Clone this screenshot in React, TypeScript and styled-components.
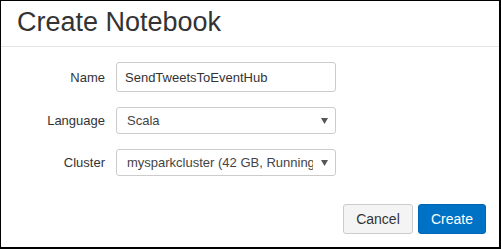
import styled, { createGlobalStyle } from 'styled-components'

const GlobalStyle = createGlobalStyle`
  html, body {
    margin: 0;
    padding: 0;
    background: #fff;
  }
  body {
    font-family: 'Liberation Sans', Arial, sans-serif;
    color: #333;
  }
`

const Frame = styled.div`
  box-sizing: border-box;
  width: 501px;
  height: 249px;
  border-style: solid;
  border-color: #000;
  border-width: 1px 2px 2px 1px;
  display: flex;
  flex-direction: column;
  background: #fff;
`

const Header = styled.div`
  box-sizing: border-box;
  height: 46px;
  padding: 5px 16px 0;
  border-bottom: 1px solid #e5e5e5;
`

const Title = styled.h1`
  margin: 0;
  font-size: 27px;
  font-weight: normal;
  line-height: 32px;
  color: #333;
`

const Form = styled.div`
  display: flex;
  flex-direction: column;
  gap: 15px;
  padding-top: 15px;
`

const Row = styled.div`
  display: grid;
  grid-template-columns: 104px 220px;
  column-gap: 11px;
  align-items: center;
`

const Label = styled.label`
  text-align: right;
  font-size: 13px;
  color: #333;
`

const TextInput = styled.input`
  box-sizing: border-box;
  height: 30px;
  width: 100%;
  padding: 0 8px;
  border: 1px solid #ccc;
  border-radius: 3px;
  font-family: 'Liberation Sans', Arial, sans-serif;
  font-size: 13px;
  color: #333;
  outline: none;
`

const SelectBox = styled.div`
  box-sizing: border-box;
  height: 27px;
  display: flex;
  align-items: center;
  padding: 0 7px 0 10px;
  border: 1px solid #ccc;
  border-radius: 3px;
  font-size: 13px;
  color: #444;
`

const SelectValue = styled.span`
  flex: 1;
  overflow: hidden;
  white-space: nowrap;
`

const Arrow = styled.svg`
  flex: none;
  width: 7px;
  height: 6px;
  margin-left: 8px;
`

const Footer = styled.div`
  display: flex;
  justify-content: flex-end;
  gap: 5px;
  padding: 28px 13px 0 0;
`

const Button = styled.button<{ $primary?: boolean }>`
  box-sizing: border-box;
  height: 30px;
  padding: 0 12px;
  min-width: ${(p) => (p.$primary ? '68px' : '70px')};
  border-radius: 3px;
  border: 1px solid ${(p) => (p.$primary ? '#0067b8' : '#ccc')};
  background: ${(p) => (p.$primary ? '#0072c6' : '#f4f4f4')};
  color: ${(p) => (p.$primary ? '#fff' : '#333')};
  font-family: 'Liberation Sans', Arial, sans-serif;
  font-size: 14px;
`

type SelectProps = { value: string }

const Select = ({ value }: SelectProps) => (
  <SelectBox>
    <SelectValue>{value}</SelectValue>
    <Arrow viewBox='0 0 7 6'>
      <path d='M0 0 H7 L3.5 6 Z' fill='#555' />
    </Arrow>
  </SelectBox>
)

export default function App() {
  return (
    <>
      <GlobalStyle />
      <Frame>
        <Header>
          <Title>Create Notebook</Title>
        </Header>
        <Form>
          <Row>
            <Label>Name</Label>
            <TextInput defaultValue='SendTweetsToEventHub' />
          </Row>
          <Row>
            <Label>Language</Label>
            <Select value='Scala' />
          </Row>
          <Row>
            <Label>Cluster</Label>
            <Select value='mysparkcluster (42 GB, Running)' />
          </Row>
        </Form>
        <Footer>
          <Button>Cancel</Button>
          <Button $primary>Create</Button>
        </Footer>
      </Frame>
    </>
  )
}
